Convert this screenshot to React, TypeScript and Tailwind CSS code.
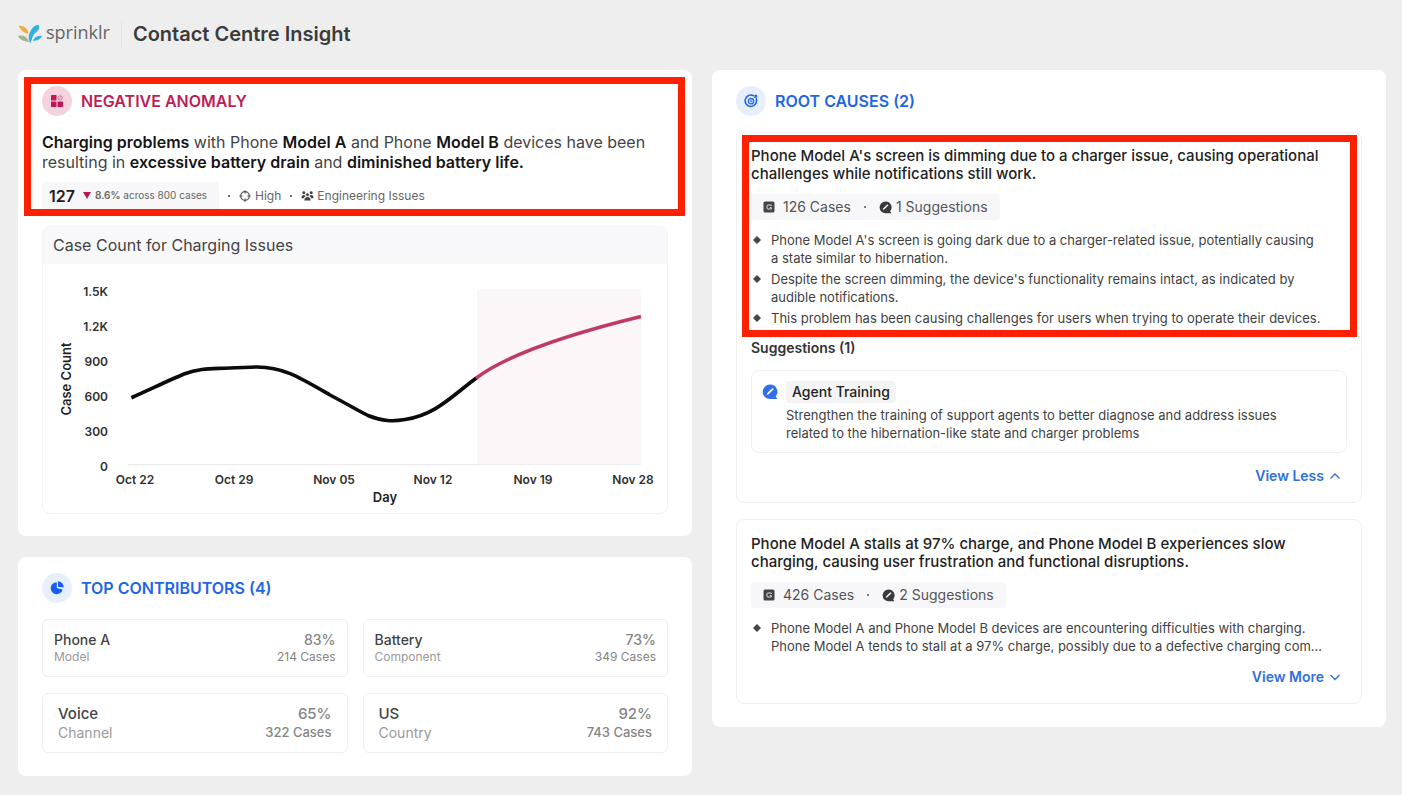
import React, { useState } from "react";

type IconProps = { className?: string };

function SprinklrMark({ className }: IconProps) {
  return (
    <svg viewBox="0 0 75 58" className={className} aria-hidden="true">
      <path d="M2 3 C17 2 31 9 33 28 C20 27 8 18 2 3Z" fill="#f0ae4e" />
      <path d="M0 35 C14 31 27 36 35 53 C21 53 7 48 0 35Z" fill="#a3b58c" />
      <path d="M64 0 C71 15 59 20 50 30 C45 37 44 46 39 58 C30 44 33 31 40 18 C46 7 54 0 64 0Z" fill="#35b0dc" />
      <path d="M75 35 C70 46 59 49 46 51 C50 39 61 32 75 35Z" fill="#35b0dc" />
    </svg>
  );
}

function TilesIcon({ className }: IconProps) {
  return (
    <svg viewBox="0 0 12 12" className={className} aria-hidden="true">
      <rect x="0" y="0" width="5.5" height="5.5" rx="0.5" fill="#c2185b" />
      <rect x="0" y="6.5" width="5.5" height="5.5" rx="0.5" fill="#c2185b" />
      <rect x="6.5" y="6.5" width="5.5" height="5.5" rx="0.5" fill="#c2185b" />
      <circle cx="9.2" cy="2.9" r="2.1" fill="none" stroke="#c2185b" strokeOpacity="0.55" strokeWidth="0.9" />
      <path d="M7.5 4.6 L10.5 1.4" stroke="#c2185b" strokeOpacity="0.4" strokeWidth="0.8" />
    </svg>
  );
}

function PieIcon({ className }: IconProps) {
  return (
    <svg viewBox="0 0 14 14" className={className} aria-hidden="true">
      <path d="M6.8 1.2 V7 L12.6 8.4 A6 6 0 1 1 6.8 1.2Z" fill="#155ff5" />
      <path d="M8 0.3 A6 6 0 0 1 13.7 6.6 L8 5.8Z" fill="#155ff5" />
    </svg>
  );
}

function TargetIcon({ className }: IconProps) {
  return (
    <svg viewBox="0 0 14 14" className={className} aria-hidden="true" fill="none" stroke="#1a66e8" strokeLinecap="round">
      <path d="M9.8 1.9 A5.7 5.7 0 1 0 12.2 4.8" strokeWidth="1.6" />
      <circle cx="7" cy="7.2" r="2.7" strokeWidth="1.3" />
      <circle cx="7" cy="7.2" r="0.7" fill="#1a66e8" strokeWidth="0.5" />
      <path d="M10.6 3.4 L12.6 1.5 M11.2 1.3 L12.8 3" strokeWidth="1.3" />
    </svg>
  );
}

function CrosshairIcon({ className }: IconProps) {
  return (
    <svg viewBox="0 0 12 12" className={className} aria-hidden="true" fill="none" stroke="#555" strokeWidth="1.2">
      <circle cx="6" cy="6" r="4.3" />
      <path d="M6 0.3 V3.6 M6 8.4 V11.7 M0.3 6 H3.6 M8.4 6 H11.7" />
    </svg>
  );
}

function TeamIcon({ className }: IconProps) {
  return (
    <svg viewBox="0 0 14 12" className={className} aria-hidden="true" fill="#444">
      <circle cx="3" cy="2.6" r="1.6" />
      <circle cx="11" cy="2.6" r="1.6" />
      <circle cx="7" cy="4.6" r="1.9" stroke="#fff" strokeWidth="0.5" />
      <path d="M0.5 8.5 C0.5 5.8 1.5 4.9 3 4.9 C4 4.9 4.6 5.3 4.9 6 C3.9 6.8 3.3 7.5 3.1 8.5Z" />
      <path d="M13.5 8.5 C13.5 5.8 12.5 4.9 11 4.9 C10 4.9 9.4 5.3 9.1 6 C10.1 6.8 10.7 7.5 10.9 8.5Z" />
      <path d="M3.6 10.8 C3.6 8.3 5 7.2 7 7.2 C9 7.2 10.4 8.3 10.4 10.8Z" />
    </svg>
  );
}

function CaseIcon({ className }: IconProps) {
  return (
    <svg viewBox="0 0 12 12" className={className} aria-hidden="true">
      <rect x="0.5" y="0.5" width="11" height="11" rx="1.5" fill="#444" />
      <path d="M8.3 5 V4 H4.7 Q4 4 4 4.7 V7.3 Q4 8 4.7 8 H8.3 V6.600 H6.800" fill="none" stroke="#ddd" strokeWidth="1" />
    </svg>
  );
}

function SuggestionIcon({ className }: IconProps) {
  return (
    <svg viewBox="0 0 16 16" className={className} aria-hidden="true">
      <path d="M8 0.5 A7.3 7.3 0 1 0 8 15.1 H15.3 L13.7 12.5 A7.3 7.3 0 0 0 8 0.5Z" fill="currentColor" />
      <path d="M4.6 11 L5.3 9 L10.4 4 L11.7 5.3 L6.6 10.3Z" fill="#fff" />
    </svg>
  );
}

function Chevron({ up }: { up: boolean }) {
  return (
    <svg viewBox="0 0 12 12" className="size-3" aria-hidden="true" fill="none" stroke="currentColor" strokeWidth="1.3">
      <path d={up ? "M1.5 8.5 L6 4 L10.5 8.5" : "M1.5 4 L6 8.5 L10.5 4"} />
    </svg>
  );
}

function SectionTitle({ icon, tone, children }: { icon: React.ReactNode; tone: "red" | "blue"; children: React.ReactNode }) {
  const red = tone === "red";
  return (
    <div className="flex items-center gap-[9px]">
      <span className={`flex size-[30px] shrink-0 items-center justify-center rounded-full ${red ? "bg-[#f3d3de]" : "bg-[#e8effc]"}`}>
        {icon}
      </span>
      <h2 className={`text-base font-semibold ${red ? "text-[#bd1e57]" : "text-[#1f66e5]"}`}>{children}</h2>
    </div>
  );
}

const yTicks = [
  { label: "1.5K", y: 28 },
  { label: "1.2K", y: 63 },
  { label: "900", y: 98 },
  { label: "600", y: 133 },
  { label: "300", y: 168 },
  { label: "0", y: 203 },
];

const xTicks = [
  { label: "Oct 22", x: 92 },
  { label: "Oct 29", x: 191 },
  { label: "Nov 05", x: 291 },
  { label: "Nov 12", x: 390 },
  { label: "Nov 19", x: 490 },
  { label: "Nov 28", x: 590 },
];

function CaseChart() {
  return (
    <svg viewBox="0 0 624 249" className="block w-full" role="img" aria-label="Case count by day">
      <rect x="434" y="25" width="164" height="175" fill="#fcf6f8" />
      <path d="M85 200.5 H434" stroke="#e9e9ec" strokeWidth="1" />
      <path d="M434 200.5 H598" stroke="#f1edf0" strokeWidth="1" />
      <g className="text-xs font-semibold" fill="#2f2f2f" textAnchor="end">
        {yTicks.map((t) => (
          <text key={t.label} x="65" y={t.y + 4}>{t.label}</text>
        ))}
      </g>
      <g className="text-xs font-semibold" fill="#2f2f2f" textAnchor="middle">
        {xTicks.map((t) => (
          <text key={t.label} x={t.x} y="220">{t.label}</text>
        ))}
      </g>
      <g className="text-[13px] font-semibold" fill="#1f1f1f" textAnchor="middle">
        <text x="342" y="238">Day</text>
        <text transform="translate(28 115) rotate(-90)">Case Count</text>
      </g>
      <path
        d="M90 133 C110 124 128 115.5 141 110 C158 103.5 170 105 187 104 C201 103.5 206 103 214 103 C240 103 256 113 287 131 C306 141 312 145 325 151.5 C340 157.5 350 157.5 362 155.5 C392 151 408 133 432 115"
        fill="none" stroke="#0b0b0b" strokeWidth="3.6" strokeLinecap="square"
      />
      <path d="M433 114.2 C457 96 510 74 598 52.5" fill="none" stroke="#bf3b66" strokeWidth="3.6" />
    </svg>
  );
}

type Contributor = { name: string; kind: string; percent: string; cases: string; large?: boolean };

const contributors: Contributor[] = [
  { name: "Phone A", kind: "Model", percent: "83%", cases: "214 Cases" },
  { name: "Battery", kind: "Component", percent: "73%", cases: "349 Cases" },
  { name: "Voice", kind: "Channel", percent: "65%", cases: "322 Cases", large: true },
  { name: "US", kind: "Country", percent: "92%", cases: "743 Cases", large: true },
];

function ContributorCard({ item }: { item: Contributor }) {
  return (
    <li
      className={`flex items-center justify-between rounded-md border border-[#f0f0f0] font-medium ${
        item.large ? "h-[60px] px-[15px] text-[15px] leading-[19px]" : "h-[58px] px-[11px] text-sm leading-[17px]"
      }`}
    >
      <div>
        <p className="text-[#444]">{item.name}</p>
        <p className={`font-normal text-[#999] ${item.large ? "text-sm leading-[19px]" : "text-xs leading-[17px]"}`}>{item.kind}</p>
      </div>
      <div className="text-right text-[#858585]">
        <p>{item.percent}</p>
        <p className={item.large ? "text-[13px] leading-[19px]" : "text-xs leading-[17px] font-normal"}>{item.cases}</p>
      </div>
    </li>
  );
}

function CauseMeta({ cases, suggestions }: { cases: number; suggestions: number }) {
  return (
    <div className="mt-[11px] flex h-[26px] w-fit items-center rounded bg-[#f7f7f9] px-3 text-sm text-[#555]">
      <CaseIcon className="mr-2 size-3" />
      <span>{cases} Cases</span>
      <span className="mx-[13px] size-[2px] rounded-full bg-[#555]" />
      <SuggestionIcon className="mr-1 size-[13px] text-[#3a3a3a]" />
      <span>{suggestions} Suggestions</span>
    </div>
  );
}

function Bullet({ children }: { children: React.ReactNode }) {
  return (
    <li className="flex gap-[10px]">
      <svg viewBox="0 0 8 8" className="mt-[5px] ml-[2px] size-2 shrink-0" aria-hidden="true">
        <path d="M4 0.3 L7.7 4 L4 7.7 L0.3 4Z" fill="#444" stroke="#444" strokeWidth="0.5" strokeLinejoin="round" />
      </svg>
      <span>{children}</span>
    </li>
  );
}

function ToggleButton({ open, onClick }: { open: boolean; onClick: () => void }) {
  return (
    <button
      type="button"
      aria-expanded={open}
      onClick={onClick}
      className="ml-auto flex items-center gap-[5px] pr-[6px] text-sm leading-[18px] font-semibold text-[#2f70dc]"
    >
      {open ? "View Less" : "View More"}
      <Chevron up={open} />
    </button>
  );
}

function Highlight({ className }: { className: string }) {
  return <div aria-hidden="true" className={`pointer-events-none absolute border-[7px] border-[#fe2000] ${className}`} />;
}

export default function App() {
  const [firstOpen, setFirstOpen] = useState(true);
  const [secondOpen, setSecondOpen] = useState(false);

  return (
    <div className="min-h-screen bg-[#eeeeee] pr-4 pb-5 pl-[18px] font-['Inter',sans-serif] text-[#3f3f3f]">
      <header className="flex h-[70px] items-center pb-[2px]">
        <a href="#home" className="flex items-center gap-1 text-[#666]">
          <SprinklrMark className="h-5 w-6" />
          <span className="pb-1 font-['Open_Sans',sans-serif] text-lg leading-6">sprinklr</span>
        </a>
        <span className="mx-[11px] h-[27px] w-px bg-[#e2e2e2]" />
        <h1 className="text-xl font-semibold text-[#3b3b3b]">Contact Centre Insight</h1>
      </header>

      <main className="grid grid-cols-2 items-start gap-5">
        <div className="flex flex-col gap-[21px]">
          <section className="rounded-lg bg-white px-6 pt-4 pb-[22px]">
            <div className="relative">
              <SectionTitle tone="red" icon={<TilesIcon className="size-3" />}>NEGATIVE ANOMALY</SectionTitle>
              <p className="mt-4 text-base leading-5 text-[#444] [&_b]:font-semibold [&_b]:text-[#161616]">
                <b>Charging problems</b> with Phone <b>Model A</b> and Phone <b>Model B</b> devices have been
                <br />
                resulting in <b>excessive battery drain</b> and <b>diminished battery life.</b>
              </p>
              <div className="mt-[10px] flex items-center text-xs text-[#666]">
                <div className="flex h-[27px] items-center rounded-t bg-[#f7f7f9] pr-3 pl-[7px]">
                  <span className="text-base font-semibold text-[#1c1c1c]">127</span>
                  <svg viewBox="0 0 8 7" className="mr-1 ml-2 h-[7px] w-2" aria-hidden="true">
                    <path d="M0 0 H8 L4 7Z" fill="#b8184f" />
                  </svg>
                  <span className="text-[10px]"><b className="font-semibold">8.6%</b> across 800 cases</span>
                </div>
                <span className="mx-[9px] size-[2px] rounded-full bg-[#444]" />
                <CrosshairIcon className="mr-1 size-3" />
                <span>High</span>
                <span className="mx-[9px] size-[2px] rounded-full bg-[#444]" />
                <TeamIcon className="mr-[3px] h-3 w-[13px]" />
                <span>Engineering Issues</span>
              </div>
              <Highlight className="-top-[9px] -right-[17px] -bottom-[7px] -left-[18px]" />
            </div>

            <div className="mt-[17px] overflow-hidden rounded-lg border border-[#f3f3f5]">
              <h3 className="bg-[#f8f8fa] px-[10px] py-2 text-base leading-[21px] text-[#444]">Case Count for Charging Issues</h3>
              <CaseChart />
            </div>
          </section>

          <section className="rounded-lg bg-white px-6 pt-4 pb-[23px]">
            <SectionTitle tone="blue" icon={<PieIcon className="size-[14px]" />}>TOP CONTRIBUTORS (4)</SectionTitle>
            <ul className="mt-4 grid grid-cols-2 gap-x-[15px] gap-y-4">
              {contributors.map((c) => (
                <ContributorCard key={c.name} item={c} />
              ))}
            </ul>
          </section>
        </div>

        <section className="rounded-lg bg-white px-6 pt-4 pb-[23px]">
          <SectionTitle tone="blue" icon={<TargetIcon className="size-[14px]" />}>ROOT CAUSES (2)</SectionTitle>

          <article className="mt-4 rounded-lg border border-[#f0f0f0] px-[14px] pt-[14px] pb-[17px]">
            <div className="relative">
              <h3 className="text-[15px] leading-[18px] font-medium text-[#222]">
                Phone Model A's screen is dimming due to a charger issue, causing operational challenges while notifications still work.
              </h3>
              <CauseMeta cases={126} suggestions={1} />
              <ul className="mt-[11px] flex flex-col gap-[3px] text-[13px] leading-[18px]">
                <Bullet>
                  Phone Model A's screen is going dark due to a charger-related issue, potentially causing
                  <br />a state similar to hibernation.
                </Bullet>
                <Bullet>
                  Despite the screen dimming, the device's functionality remains intact, as indicated by
                  <br />audible notifications.
                </Bullet>
                <Bullet>This problem has been causing challenges for users when trying to operate their devices.</Bullet>
              </ul>
              <Highlight className="-top-3 -right-[10px] -bottom-[10px] -left-[9px]" />
            </div>
            {firstOpen && (
              <>
                <h4 className="mt-3 text-sm leading-[18px] font-semibold text-[#333]">Suggestions (1)</h4>
                <div className="mt-[13px] flex gap-2 rounded-lg border border-[#f0f0f0] p-[10px]">
                  <SuggestionIcon className="mt-[3px] size-4 shrink-0 text-[#2f6fea]" />
                  <div>
                    <div className="flex h-[22px] w-fit items-center rounded bg-[#f4f4f6] px-[6px] text-sm font-medium text-[#222]">
                      Agent Training
                    </div>
                    <p className="mt-[3px] text-[13px] leading-[18px]">
                      Strengthen the training of support agents to better diagnose and address issues
                      <br />related to the hibernation-like state and charger problems
                    </p>
                  </div>
                </div>
              </>
            )}
            <div className="mt-[14px] flex">
              <ToggleButton open={firstOpen} onClick={() => setFirstOpen(!firstOpen)} />
            </div>
          </article>

          <article className="mt-4 rounded-lg border border-[#f0f0f0] px-[14px] pt-[15px] pb-[17px]">
            <h3 className="text-[15px] leading-[18px] font-medium text-[#222]">
              Phone Model A stalls at 97% charge, and Phone Model B experiences slow charging, causing user frustration and functional disruptions.
            </h3>
            <CauseMeta cases={426} suggestions={2} />
            <ul className="mt-[11px] text-[13px] leading-[18px]">
              <Bullet>
                Phone Model A and Phone Model B devices are encountering difficulties with charging.
                <br />
                Phone Model A tends to stall at a 97% charge, possibly due to a defective charging com{secondOpen ? "ponent." : "..."}
              </Bullet>
            </ul>
            <div className="mt-[13px] flex">
              <ToggleButton open={secondOpen} onClick={() => setSecondOpen(!secondOpen)} />
            </div>
          </article>
        </section>
      </main>
    </div>
  );
}
